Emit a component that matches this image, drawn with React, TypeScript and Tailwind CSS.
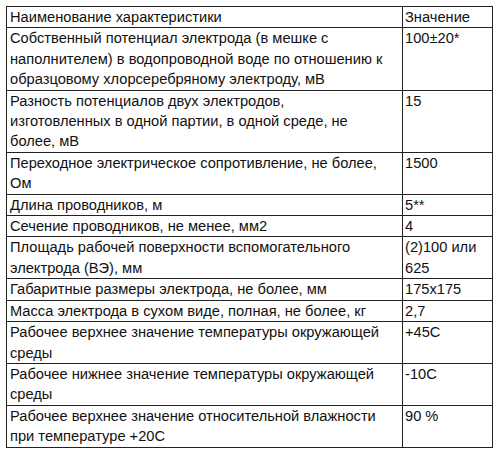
import React from 'react';

type Row = { name: React.ReactNode; value: string };

const rows: Row[] = [
  {
    name: 'Собственный потенциал электрода (в мешке с наполнителем) в водопроводной воде по отношению к образцовому хлорсеребряному электроду, мВ',
    value: '100±20*',
  },
  {
    name: (
      <>
        Разность потенциалов двух электродов,
        <br />
        изготовленных в одной партии, в одной среде, не
        <br />
        более, мВ
      </>
    ),
    value: '15',
  },
  { name: 'Переходное электрическое сопротивление, не более, Ом', value: '1500' },
  { name: 'Длина проводников, м', value: '5**' },
  { name: 'Сечение проводников, не менее, мм2', value: '4' },
  {
    name: 'Площадь рабочей поверхности вспомогательного электрода (ВЭ), мм',
    value: '(2)100 или 625',
  },
  { name: 'Габаритные размеры электрода, не более, мм', value: '175х175' },
  { name: 'Масса электрода в сухом виде, полная, не более, кг', value: '2,7' },
  { name: 'Рабочее верхнее значение температуры окружающей среды', value: '+45С' },
  { name: 'Рабочее нижнее значение температуры окружающей среды', value: '-10С' },
  {
    name: 'Рабочее верхнее значение относительной влажности при температуре +20С',
    value: '90 %',
  },
];

export default function App() {
  return (
    <div className="bg-white w-[502px] h-[455px] pt-[6px] pl-[6px] font-['Liberation_Sans',Arial,sans-serif] text-[14.67px] leading-[20.4px] text-[#111]">
      <table className="border-collapse w-[486px] table-fixed">
        <colgroup>
          <col className="w-[396px]" />
          <col className="w-[90px]" />
        </colgroup>
        <thead>
          <tr>
            <th className="border border-[#222] font-normal text-left align-top px-[3px] py-0">
              Наименование характеристики
            </th>
            <th className="border border-[#222] font-normal text-left align-top px-[2px] py-0">
              Значение
            </th>
          </tr>
        </thead>
        <tbody>
          {rows.map((r, i) => (
            <tr key={i}>
              <td className="border border-[#222] align-top px-[3px] py-0">{r.name}</td>
              <td className="border border-[#222] align-top px-[2px] py-0">{r.value}</td>
            </tr>
          ))}
        </tbody>
      </table>
    </div>
  );
}
